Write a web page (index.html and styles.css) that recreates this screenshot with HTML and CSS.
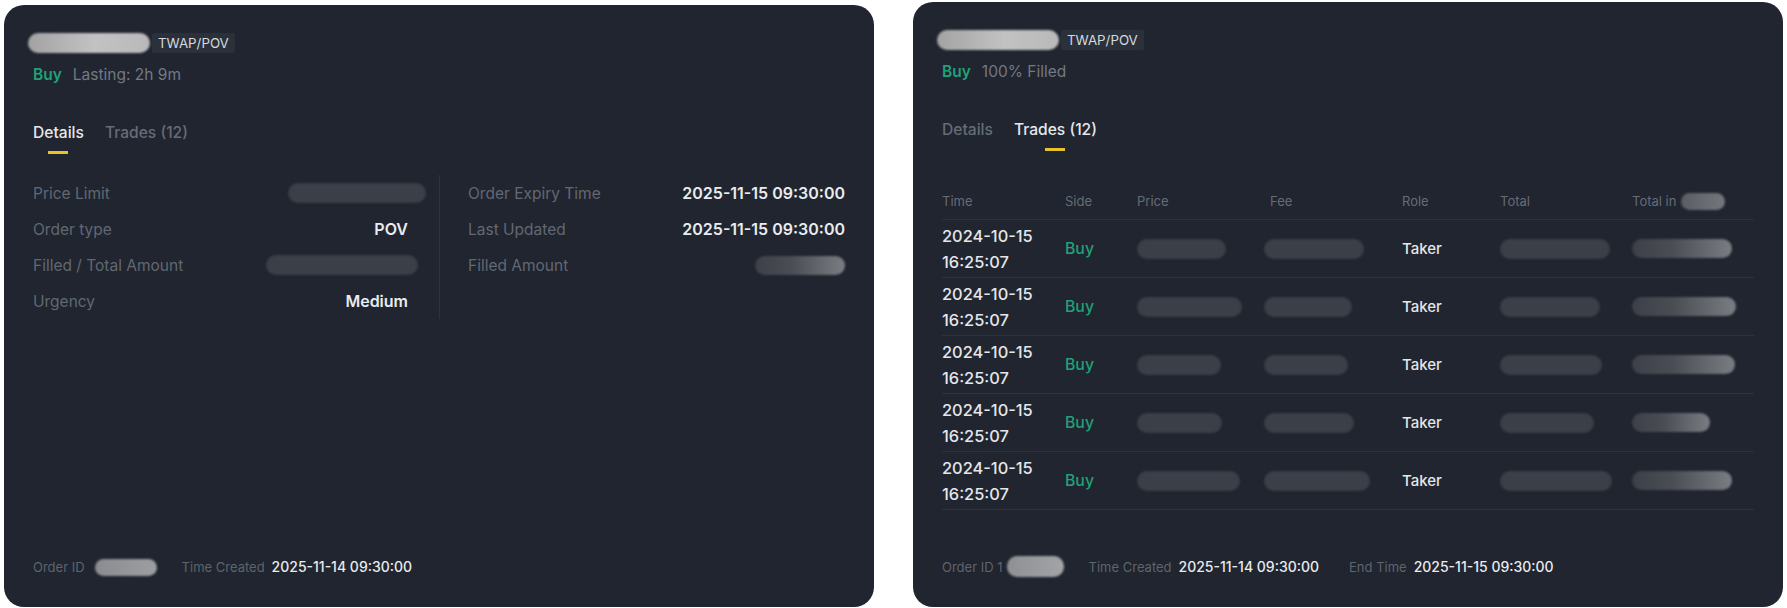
FILE: index.html
```html
<!DOCTYPE html>
<html lang="en">
<head>
<meta charset="utf-8">
<title>Order details</title>
<link rel="stylesheet" href="styles.css">
</head>
<body>
<div class="page">
  <section class="card card-left">
    <div class="title-row"><span class="blur blur-title"></span><span class="badge">TWAP/POV</span></div>
    <div class="meta"><span class="side">Buy</span><span class="meta-text">Lasting: 2h 9m</span></div>
    <nav class="tabs">
      <div class="tab active">Details</div>
      <div class="tab">Trades (12)</div>
    </nav>
    <div class="details">
      <div class="col">
        <div class="drow"><span class="dlabel">Price Limit</span><span class="blur blur-dark blur-pl"></span></div>
        <div class="drow"><span class="dlabel">Order type</span><span class="dval">POV</span></div>
        <div class="drow"><span class="dlabel">Filled / Total Amount</span><span class="blur blur-dark blur-ft"></span></div>
        <div class="drow"><span class="dlabel">Urgency</span><span class="dval">Medium</span></div>
      </div>
      <div class="col col-right">
        <div class="drow"><span class="dlabel">Order Expiry Time</span><span class="dval">2025-11-15 09:30:00</span></div>
        <div class="drow"><span class="dlabel">Last Updated</span><span class="dval">2025-11-15 09:30:00</span></div>
        <div class="drow"><span class="dlabel">Filled Amount</span><span class="blur blur-fade blur-fa"></span></div>
      </div>
    </div>
    <footer class="foot">
      <div class="fitem"><span class="flabel">Order ID</span><span class="blur blur-id"></span></div>
      <div class="fitem"><span class="flabel">Time Created</span><span class="fval">2025-11-14 09:30:00</span></div>
    </footer>
  </section>

  <section class="card card-right">
    <div class="title-row"><span class="blur blur-title"></span><span class="badge">TWAP/POV</span></div>
    <div class="meta"><span class="side">Buy</span><span class="meta-text">100% Filled</span></div>
    <nav class="tabs">
      <div class="tab">Details</div>
      <div class="tab active">Trades (12)</div>
    </nav>
    <div class="trades">
      <div class="trow thead">
        <span>Time</span><span>Side</span><span>Price</span><span>Fee</span><span>Role</span><span>Total</span><span class="tin">Total in <span class="blur blur-hdr"></span></span>
      </div>
      <div class="trow">
        <span class="ttime">2024-10-15<br>16:25:07</span><span class="side">Buy</span>
        <span class="blur blur-dark" style="width:89px"></span><span class="blur blur-dark blur-fee" style="width:100px"></span>
        <span class="trole">Taker</span><span class="blur blur-dark" style="width:110px"></span><span class="blur blur-fade" style="width:100px"></span>
      </div>
      <div class="trow">
        <span class="ttime">2024-10-15<br>16:25:07</span><span class="side">Buy</span>
        <span class="blur blur-dark" style="width:105px"></span><span class="blur blur-dark blur-fee" style="width:88px"></span>
        <span class="trole">Taker</span><span class="blur blur-dark" style="width:100px"></span><span class="blur blur-fade" style="width:104px"></span>
      </div>
      <div class="trow">
        <span class="ttime">2024-10-15<br>16:25:07</span><span class="side">Buy</span>
        <span class="blur blur-dark" style="width:84px"></span><span class="blur blur-dark blur-fee" style="width:84px"></span>
        <span class="trole">Taker</span><span class="blur blur-dark" style="width:102px"></span><span class="blur blur-fade" style="width:103px"></span>
      </div>
      <div class="trow">
        <span class="ttime">2024-10-15<br>16:25:07</span><span class="side">Buy</span>
        <span class="blur blur-dark" style="width:85px"></span><span class="blur blur-dark blur-fee" style="width:90px"></span>
        <span class="trole">Taker</span><span class="blur blur-dark" style="width:94px"></span><span class="blur blur-fade" style="width:78px"></span>
      </div>
      <div class="trow">
        <span class="ttime">2024-10-15<br>16:25:07</span><span class="side">Buy</span>
        <span class="blur blur-dark" style="width:103px"></span><span class="blur blur-dark blur-fee" style="width:106px"></span>
        <span class="trole">Taker</span><span class="blur blur-dark" style="width:112px"></span><span class="blur blur-fade" style="width:100px"></span>
      </div>
    </div>
    <footer class="foot">
      <div class="fitem"><span class="flabel">Order ID <span class="id-digit">1</span></span><span class="blur blur-id blur-id2"></span></div>
      <div class="fitem"><span class="flabel">Time Created</span><span class="fval">2025-11-14 09:30:00</span></div>
      <div class="fitem fitem-end"><span class="flabel">End Time</span><span class="fval">2025-11-15 09:30:00</span></div>
    </footer>
  </section>
</div>
</body>
</html>
```

FILE: styles.css
```css
* { box-sizing: border-box; }
body { margin: 0; background: #ffffff; font-family: Inter, "Noto Sans", sans-serif; }
.page { display: flex; align-items: flex-start; gap: 39px; padding-left: 4px; }
.card { width: 870px; background: #20252f; border-radius: 20px; display: flex; flex-direction: column; padding: 28px 29px 30px; color: #e6e8eb; }
.card-left { margin-top: 5px; height: 602px; }
.card-right { margin-top: 2px; height: 605px; }

.title-row { display: flex; align-items: center; height: 20px; gap: 2px; }
.blur { display: inline-block; border-radius: 10px; filter: blur(1.2px); }
.blur-title { width: 122px; height: 20px; margin-left: -5px; background: linear-gradient(90deg, #a3a3a3, #c2c2c2 55%, #b9b9b9); }
.badge { height: 20px; padding: 0 6px; background: #2b313b; font-size: 13.3px; line-height: 20px; color: #d6d9de; border-radius: 2px; }

.meta { margin-top: 12px; display: flex; gap: 11px; font-size: 15.5px; line-height: 20px; }
.side { color: #21a177; font-weight: 600; }
.meta-text { color: #737984; }

.tabs { display: flex; gap: 21px; margin-top: 38px; }
.tab { display: flex; flex-direction: column; align-items: center; font-size: 15.6px; line-height: 20px; color: #666c77; font-weight: 500; }
.tab::after { content: ""; width: 20px; height: 3px; margin-top: 8px; background: transparent; }
.tab.active { color: #e6e8eb; }
.tab.active::after { background: #e9c22b; }

.details { display: grid; grid-template-columns: 1fr 1fr; margin-top: 19px; padding-top: 2px; }
.col { padding-right: 31px; }
.col-right { padding-right: 0; padding-left: 28px; border-left: 1px solid #2d333d; }
.drow { display: flex; justify-content: space-between; align-items: center; height: 36px; font-size: 15.5px; }
.dlabel { color: #626873; }
.dval { color: #e9ebee; font-weight: 600; font-size: 16px; }
.blur-dark { height: 20px; background: #3b3f47; }
.blur-pl { width: 138px; margin-right: -18px; }
.blur-ft { width: 152px; margin-right: -10px; }
.blur-fade { height: 19px; background: linear-gradient(90deg, #3d4048, #4a4d54 40%, #7a7d82); }
.blur-fa { width: 90px; }

.trades { margin-top: 32px; }
.trow { display: grid; grid-template-columns: 123px 72px 133px 132px 98px 132px 122px; align-items: center; height: 58px; border-bottom: 1px solid #2d333d; font-size: 15.5px; }
.thead { height: 37px; font-size: 13px; color: #666c77; }
.tin { display: flex; align-items: center; }
.blur-hdr { width: 44px; height: 17px; margin-left: 5px; background: linear-gradient(90deg, #5a5d63, #74777c); }
.ttime { line-height: 26px; color: #e4e6e9; font-size: 16.4px; font-weight: 500; }
.trow .side { font-weight: 500; font-size: 15.8px; }
.trole { color: #e4e6e9; font-weight: 500; font-size: 15px; }
.blur-fee { margin-left: -6px; }

.foot { margin-top: auto; display: flex; gap: 25px; line-height: 20px; font-size: 13px; }
.fitem { display: flex; align-items: center; gap: 7px; }
.fitem-end { margin-left: 5px; }
.flabel { color: #5e646e; }
.fval { color: #e9ebee; font-weight: 500; font-size: 14px; }
.blur-id { width: 62px; height: 17px; margin-left: 3px; background: linear-gradient(90deg, #8a8c90, #9c9ea1); }
.id-digit { color: #5e646e; }
.blur-id2 { width: 57px; height: 21px; margin-left: -3px; background: linear-gradient(90deg, #8e9094, #a2a4a7); }
```
